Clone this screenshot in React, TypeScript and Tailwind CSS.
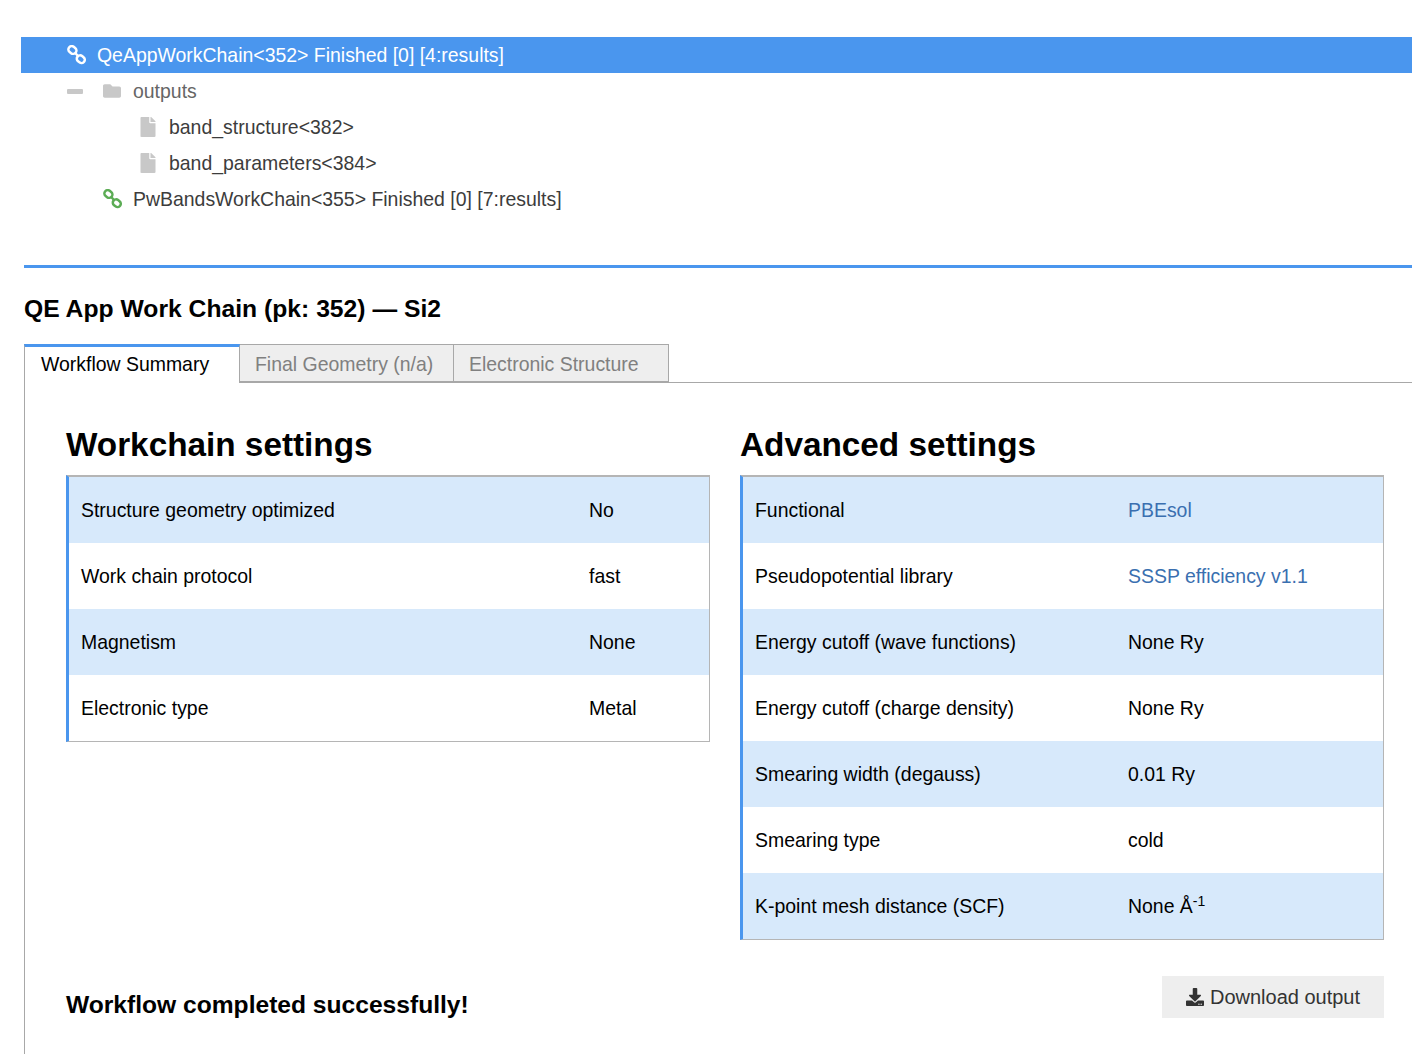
import React from 'react';
import { FaDownload, FaFile, FaFolder } from 'react-icons/fa';

const ChainIcon = ({ className }: { className: string }) => (
    <svg viewBox="0 0 20 20" className={className} fill="none" stroke="currentColor" strokeWidth="2.5">
        <rect x="-4.2" y="-3.3" width="8.4" height="6.6" rx="3.3" transform="translate(5.4 5) rotate(38)" />
        <rect x="-4.2" y="-3.3" width="8.4" height="6.6" rx="3.3" transform="translate(13.8 14.2) rotate(38)" />
        <path d="M8.2 8 L11 11" />
    </svg>
);

const TreeRow = ({ icon, text }: { icon: React.ReactNode; text: string }) => (
    <div className="flex h-9 items-center pl-[118px] text-[#3c3c3c]">
        <span className="flex w-[30px] shrink-0 items-center pl-[1px]">{icon}</span>
        <span className="pt-[2px]">{text}</span>
    </div>
);

const SettingsTable = ({ rows, labelWidth }: { rows: [string, React.ReactNode, boolean?][]; labelWidth: string }) => (
    <div className="border border-t-2 border-l-[3px] border-[#b5b5b5] border-l-[#4a96ee]">
        {rows.map(([label, value, link], i) => (
            <div key={label} className={`flex h-[66px] items-center pl-3 pt-[2px] text-black ${i % 2 === 0 ? 'bg-[#d7e9fb]' : 'bg-white'}`}>
                <div className={labelWidth}>{label}</div>
                <div className={link ? 'text-[#3a6fb0]' : ''}>{value}</div>
            </div>
        ))}
    </div>
);

const App = () => {
    return (
        <div className="h-[1054px] overflow-hidden bg-white pl-[21px] pt-[37px] text-[19.45px] font-['Liberation_Sans',Arial,sans-serif]">
            <div className="flex h-9 items-center bg-[#4a96ee] pl-[46px] text-white">
                <span className="flex w-[30px] shrink-0 items-center">
                    <ChainIcon className="h-[20px] w-[20px]" />
                </span>
                <span className="pt-[2px]">QeAppWorkChain&lt;352&gt; Finished [0] [4:results]</span>
            </div>
            <div className="flex h-9 items-center pl-[46px] text-[#666]">
                <span className="flex w-9 shrink-0 items-center">
                    <span className="h-[5px] w-4 rounded-[1px] bg-[#c8c8c8]" />
                </span>
                <span className="flex w-[30px] shrink-0 items-center">
                    <FaFolder className="h-[18px] w-[18px] text-[#c8c8c8]" />
                </span>
                <span className="pt-[2px]">outputs</span>
            </div>
            <TreeRow icon={<FaFile className="h-[20px] w-[16px] text-[#c8c8c8]" />} text="band_structure<382>" />
            <TreeRow icon={<FaFile className="h-[20px] w-[16px] text-[#c8c8c8]" />} text="band_parameters<384>" />
            <div className="flex h-9 items-center pl-[82px] text-[#3c3c3c]">
                <span className="flex w-[30px] shrink-0 items-center">
                    <ChainIcon className="h-[20px] w-[20px] text-[#5cac55]" />
                </span>
                <span className="pt-[2px]">PwBandsWorkChain&lt;355&gt; Finished [0] [7:results]</span>
            </div>

            <div className="ml-[3px] mt-[48px] h-[3px] bg-[#4a96ee]" />

            <div className="ml-[3px]">
                <h2 className="mt-[26px] h-[30px] text-[24.7px] leading-[30px] font-bold text-black">QE App Work Chain (pk: 352) — Si2</h2>

                <div className="mt-[20px] flex h-[39px] border-b border-[#a8a8a8] text-[#808080]">
                    <div className="z-10 flex h-[39px] w-[216px] items-center border-x border-t-[3px] border-x-[#a8a8a8] border-t-[#4a96ee] bg-white pl-4 text-black">Workflow Summary</div>
                    <div className="flex h-[38px] w-[214px] items-center border-y border-r border-[#a8a8a8] bg-[#eeeeee] pl-[15px] pt-[3px]">Final Geometry (n/a)</div>
                    <div className="flex h-[38px] w-[215px] items-center border-y border-r border-[#a8a8a8] bg-[#eeeeee] pl-[15px] pt-[3px]">Electronic Structure</div>
                </div>

                <div className="h-[700px] border-l border-[#a8a8a8] pl-[41px] pr-[28px] pt-[40px]">
                    <div className="grid grid-cols-2 gap-x-[30px]">
                        <div>
                            <h1 className="mb-[9px] h-[43px] text-[33.3px] leading-[43px] font-bold text-black">Workchain settings</h1>
                            <SettingsTable
                                labelWidth="w-[508px]"
                                rows={[
                                    ['Structure geometry optimized', 'No'],
                                    ['Work chain protocol', 'fast'],
                                    ['Magnetism', 'None'],
                                    ['Electronic type', 'Metal'],
                                ]}
                            />
                        </div>
                        <div>
                            <h1 className="mb-[9px] h-[43px] text-[33.3px] leading-[43px] font-bold text-black">Advanced settings</h1>
                            <SettingsTable
                                labelWidth="w-[373px]"
                                rows={[
                                    ['Functional', 'PBEsol', true],
                                    ['Pseudopotential library', 'SSSP efficiency v1.1', true],
                                    ['Energy cutoff (wave functions)', 'None Ry'],
                                    ['Energy cutoff (charge density)', 'None Ry'],
                                    ['Smearing width (degauss)', '0.01 Ry'],
                                    ['Smearing type', 'cold'],
                                    ['K-point mesh distance (SCF)', <>None Å<sup className="text-[14px]">-1</sup></>],
                                ]}
                            />
                        </div>
                    </div>

                    <div className="mt-[36px] flex items-start justify-between">
                        <div className="mt-[14px] text-[24.6px] leading-[30px] font-bold text-black">Workflow completed successfully!</div>
                        <button className="flex h-[42px] w-[222px] items-center justify-center gap-[6px] bg-[#eeeeee] text-[20px] text-[#333]">
                            <FaDownload className="h-[18px] w-[18px]" />
                            Download output
                        </button>
                    </div>
                </div>
            </div>
        </div>
    );
};

export default App;
